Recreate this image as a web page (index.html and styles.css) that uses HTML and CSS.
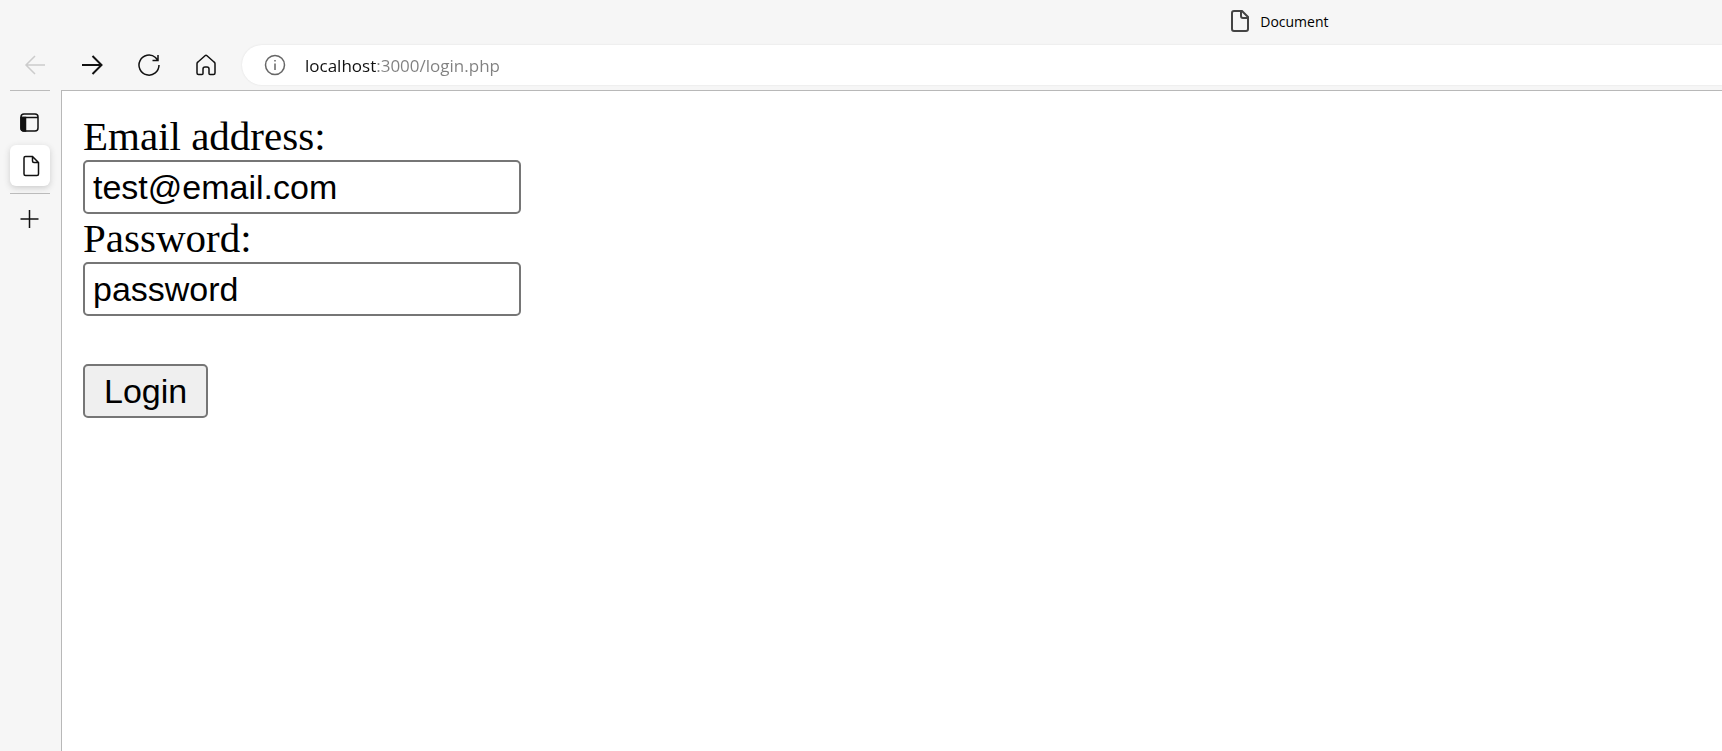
FILE: index.html
```html
<!DOCTYPE html>
<html lang="en">
<head>
  <meta charset="UTF-8" />
  <meta name="viewport" content="width=device-width, initial-scale=1" />
  <title>Document</title>
  <link rel="stylesheet" href="styles.css">
</head>
<body>
  <div class="title-bar">
    <svg class="title-icon" width="18" height="22" viewBox="0 0 18 22">
      <path d="M3 1H11l6 6v12a2 2 0 0 1-2 2h-12A2 2 0 0 1 1 19v-16A2 2 0 0 1 3 1z" />
      <path d="M10 1v5a2 2 0 0 0 2 2h5" />
    </svg>
    <span>Document</span>
  </div>

  <header class="toolbar">
    <button class="nav-btn" aria-label="Back" disabled>
      <svg width="22" height="22" viewBox="0 0 22 22"><path d="M21 11H2M11 2l-9 9 9 9" /></svg>
    </button>
    <button class="nav-btn forward" aria-label="Forward">
      <svg width="22" height="22" viewBox="0 0 22 22"><path d="M1 11h20M11.500 2l9 9-9 9" /></svg>
    </button>
    <button class="nav-btn" aria-label="Refresh">
      <svg width="22" height="22" viewBox="0 0 22 22"><path d="M21 11a10 10 0 1 1-3.500-7.500L20 6.500M20 1v5.500h-5.500" /></svg>
    </button>
    <button class="nav-btn" aria-label="Home">
      <svg width="22" height="22" viewBox="0 0 22 22"><path d="M10 1.700a1.500 1.500 0 0 1 2 0l7 6.300a2 2 0 0 1 1 1.500V19a1.500 1.500 0 0 1-1.500 1.500H15a1 1 0 0 1-1-1V15a2 2 0 0 0-2-2h-2a2 2 0 0 0-2 2v4.500a1 1 0 0 1-1 1H3.500A1.500 1.500 0 0 1 2 19V9.500a2 2 0 0 1 1-1.500z" /></svg>
    </button>
    <div class="address-bar">
      <svg class="info" width="22" height="22" viewBox="0 0 22 22">
        <circle cx="11" cy="11" r="9.500" />
        <path d="M11 9.500v6.500M11 6v1.500" />
      </svg>
      <input class="url" type="text" value="localhost:3000/login.php" aria-label="Address" spellcheck="false" />
    </div>
  </header>

  <div class="window">
    <nav class="sidebar">
      <button class="side-btn" aria-label="Tab actions">
        <svg width="20" height="20" viewBox="0 0 20 20">
          <rect x="1" y="1" width="17" height="17" rx="3" />
          <path d="M1 4.500h17" />
          <path class="solid" d="M1 4.500h4.500V18H4a3 3 0 0 1-3-3z" />
        </svg>
      </button>
      <button class="side-btn active" aria-label="Document">
        <svg width="18" height="22" viewBox="0 0 18 22">
          <path d="M3.500 1.500h7l6 6v11.500a1.500 1.500 0 0 1-1.500 1.500H3.500A1.500 1.500 0 0 1 2 19V3a1.500 1.500 0 0 1 1.500-1.500zM10.500 1.500v4.500A1.500 1.500 0 0 0 12 7.500h4.500" />
        </svg>
      </button>
      <button class="side-btn new-tab" aria-label="New tab">
        <svg width="20" height="20" viewBox="0 0 20 20"><path d="M9.500 1v18M.5 10h18" /></svg>
      </button>
    </nav>

    <main class="page">
      <form class="login">
        <label for="email">Email address:</label>
        <input type="text" id="email" name="email" value="test@email.com" />
        <label for="password">Password:</label>
        <input type="text" id="password" name="password" value="password" />
        <button type="button">Login</button>
      </form>
    </main>
  </div>
</body>
</html>
```
FILE: styles.css
```css
* {
  box-sizing: border-box;
}
body {
  margin: 0;
  min-height: 100vh;
  display: flex;
  flex-direction: column;
  background: #f6f6f6;
  color: #000;
  font-family: "Open Sans", "Noto Sans", sans-serif;
}
svg {
  display: block;
  flex-shrink: 0;
  fill: none;
  stroke: #111;
  stroke-width: 1.5;
}
.solid {
  fill: #111;
}
.title-bar {
  height: 42px;
  padding-left: 71.5%;
  display: flex;
  align-items: center;
  gap: 11px;
  font-size: 14px;
}
.title-icon {
  stroke: #444;
  stroke-width: 2;
}

/* Navigation buttons and address */
.toolbar {
  height: 48px;
  padding: 0 0 2px 6px;
  display: flex;
  align-items: center;
}
.nav-btn {
  width: 57px;
  height: 40px;
  padding: 0;
  border: none;
  background: none;
  display: flex;
  align-items: center;
  justify-content: center;
}
.nav-btn:disabled svg {
  stroke: #ccc;
}
.forward svg {
  stroke-width: 2;
}
.address-bar {
  flex: 1;
  height: 40px;
  margin-left: 8px;
  padding-left: 22px;
  display: flex;
  align-items: center;
  gap: 19px;
  background: #fff;
  border-radius: 20px 0 0 20px;
  box-shadow: 0 0 2px #ddd;
}
.info {
  stroke: #666;
}
.url {
  flex: 1;
  padding: 0;
  border: none;
  outline: none;
  font-family: inherit;
  font-size: 17px;
  color: transparent;
  /* host name dark, the rest of the address grey */
  background: linear-gradient(to right, #111 72px, #808080 72px);
  -webkit-background-clip: text;
  background-clip: text;
}

/* Vertical tabs */
.window {
  flex: 1;
  display: flex;
}
.sidebar {
  width: 61px;
  padding: 0 11px 0 10px;
  display: flex;
  flex-direction: column;
}
.side-btn {
  height: 41px;
  padding: 0;
  border: none;
  border-radius: 6px;
  background: none;
  display: flex;
  align-items: center;
  justify-content: center;
}
.side-btn:first-child {
  height: 55px;
  padding-top: 9px;
  border-top: 1px solid #bbb;
  border-radius: 0;
}
.side-btn.active {
  padding-left: 2px;
  background: #fff;
  box-shadow: 0 2px 6px #ccc;
}
.side-btn.new-tab {
  height: 50px;
  margin-top: 7px;
  border-top: 1px solid #bbb;
  border-radius: 0;
}

.page {
  flex: 1;
  padding: 21px;
  background: #fff;
  border-top: 1px solid #b8b8b8;
  border-left: 1px solid #b8b8b8;
}
.login {
  display: flex;
  flex-direction: column;
  align-items: flex-start;
}
.login label {
  font: 41px/48px "Liberation Serif", "Times New Roman", serif;
}
.login input,
.login button {
  height: 54px;
  border: 2px solid #767676;
  border-radius: 5px;
  color: #000;
  font: 34px "Liberation Sans", Arial, sans-serif;
}
.login input {
  width: 438px;
  max-width: 100%;
  padding: 2px 8px;
  background: #fff;
}
.login button {
  margin-top: 48px;
  padding: 2px 19px;
  background: #efefef;
}
```
